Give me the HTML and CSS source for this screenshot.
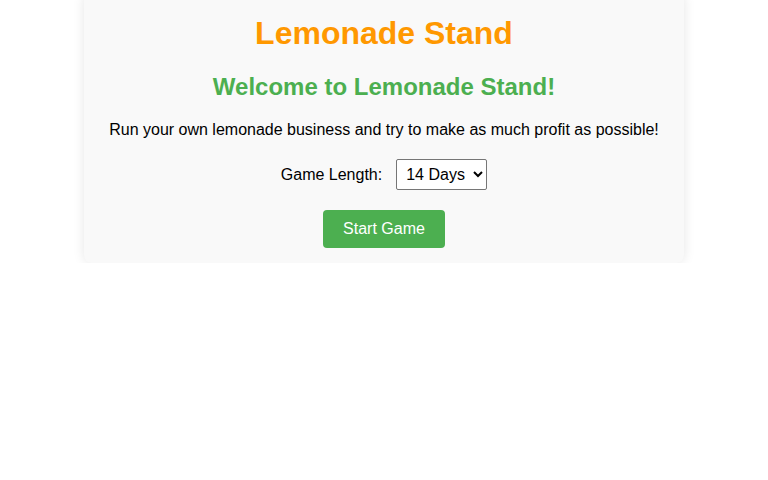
FILE: index.html
```html
<!DOCTYPE html>
<html lang="en">
<head>
<meta charset="utf-8">
<title>Lemonade Stand</title>
<link rel="stylesheet" href="styles.css">
</head>
<body>
  <main class="card">
    <h1 class="title">Lemonade Stand</h1>
    <section class="intro">
      <h2 class="welcome">Welcome to Lemonade Stand!</h2>
      <p class="lead">Run your own lemonade business and try to make as much profit as possible!</p>
      <div class="setting">
        <label class="setting-label" for="days">Game Length:</label>
        <select id="days" class="setting-select">
          <option>7 Days</option>
          <option selected>14 Days</option>
          <option>30 Days</option>
        </select>
      </div>
      <button class="start-btn" type="button">Start Game</button>
    </section>
  </main>
</body>
</html>
```
FILE: styles.css
```css
html, body {
  margin: 0;
  padding: 0;
  background: #ffffff;
  font-family: "Liberation Sans", Arial, sans-serif;
  color: #000;
}

.card {
  width: 600px;
  box-sizing: border-box;
  margin: -7px auto 0;
  padding: 22px 20px 15px;
  background: #f9f9f9;
  border-radius: 8px;
  box-shadow: 0 0 12px rgba(0, 0, 0, 0.1);
  text-align: center;
}

.title {
  margin: 0;
  font-size: 32px;
  font-weight: bold;
  color: #ff9800;
}

.intro {
  display: flex;
  flex-direction: column;
  align-items: center;
}

.welcome {
  margin: 21px 0 20px;
  font-size: 24px;
  font-weight: bold;
  color: #4caf50;
}

.lead {
  margin: 0 0 20px;
  font-size: 16px;
}

.setting {
  display: flex;
  align-items: center;
  justify-content: center;
  gap: 14px;
  margin-bottom: 20px;
  font-size: 16px;
}

.setting-select {
  height: 31px;
  padding: 5px;
  font-family: "Liberation Sans", Arial, sans-serif;
  font-size: 16px;
  color: #000;
  background: #fff;
  border: 1px solid #767676;
  border-radius: 2px;
}

.start-btn {
  padding: 10px 20px;
  font-family: "Liberation Sans", Arial, sans-serif;
  font-size: 16px;
  line-height: 18px;
  color: #fff;
  background: #4caf50;
  border: none;
  border-radius: 4px;
  cursor: pointer;
}
```
